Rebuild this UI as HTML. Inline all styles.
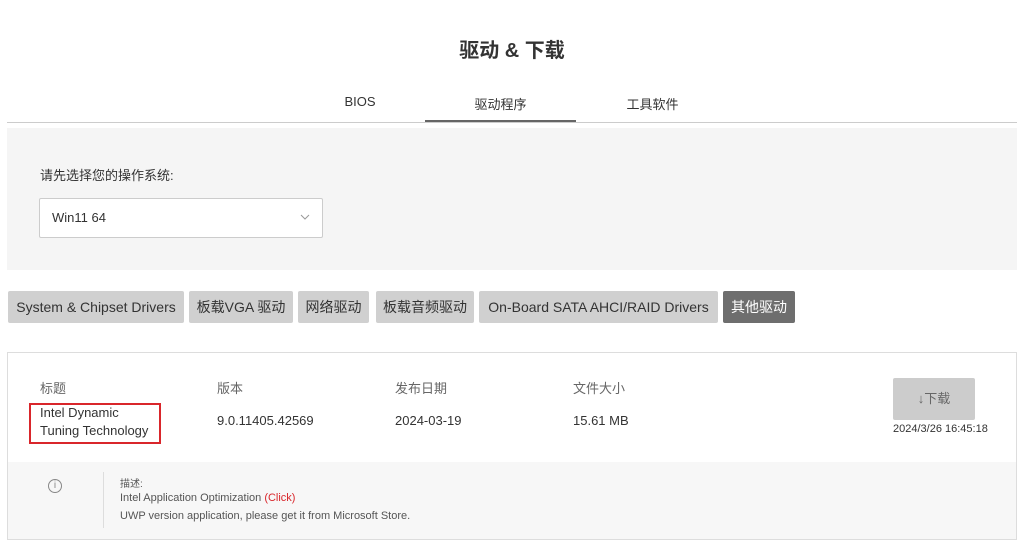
<!DOCTYPE html>
<html><head><meta charset="utf-8"><style>
*{margin:0;padding:0;box-sizing:border-box}
body{width:1024px;height:546px;background:#fff;font-family:"Liberation Sans","Noto Sans CJK SC",sans-serif;color:#333;position:relative;overflow:hidden}
.a{position:absolute;white-space:nowrap}
.btn{position:absolute;top:291px;height:32px;background:#d0d0d0;font-size:14px;line-height:32px;text-align:center;color:#333;border-radius:2px}
</style></head><body>
<div class="a" style="left:0;width:1024px;top:34px;text-align:center;font-size:20px;font-weight:bold;color:#333">驱动 &amp; 下载</div>
<div class="a" style="left:330px;width:60px;top:94px;text-align:center;font-size:13px">BIOS</div>
<div class="a" style="left:425px;width:151px;top:94px;text-align:center;font-size:13px">驱动程序</div>
<div class="a" style="left:600px;width:105px;top:94px;text-align:center;font-size:13px">工具软件</div>
<div class="a" style="left:7px;width:1010px;top:122px;height:1px;background:#ccc"></div>
<div class="a" style="left:425px;width:151px;top:120px;height:2px;background:#666"></div>
<div class="a" style="left:7px;width:1010px;top:128px;height:142px;background:#f5f5f5"></div>
<div class="a" style="left:40px;top:165px;font-size:13px">请先选择您的操作系统:</div>
<div class="a" style="left:39px;top:198px;width:284px;height:40px;background:#fff;border:1px solid #ccc;border-radius:2px;font-size:13px;line-height:38px;padding-left:12px">Win11 64<svg style="position:absolute;right:12px;top:14px" width="10" height="8"><path d="M1 2 L5 6 L9 2" fill="none" stroke="#999" stroke-width="1"/></svg></div>
<div class="btn" style="left:8px;width:176px">System &amp; Chipset Drivers</div>
<div class="btn" style="left:189px;width:104px">板载VGA 驱动</div>
<div class="btn" style="left:298px;width:71px">网络驱动</div>
<div class="btn" style="left:376px;width:98px">板载音频驱动</div>
<div class="btn" style="left:479px;width:239px">On-Board SATA AHCI/RAID Drivers</div>
<div class="btn" style="left:723px;width:72px;background:#6e6e6e;color:#fff">其他驱动</div>
<div class="a" style="left:7px;top:352px;width:1010px;height:188px;border:1px solid #ddd"></div>
<div class="a" style="left:8px;top:462px;width:1008px;height:77px;background:#f7f7f7"></div>
<div class="a" style="left:40px;top:378px;font-size:13px;color:#666">标题</div>
<div class="a" style="left:217px;top:378px;font-size:13px;color:#666">版本</div>
<div class="a" style="left:395px;top:378px;font-size:13px;color:#666">发布日期</div>
<div class="a" style="left:573px;top:378px;font-size:13px;color:#666">文件大小</div>
<div class="a" style="left:29px;top:403px;width:132px;height:41px;border:2px solid #d9262b"></div>
<div class="a" style="left:40px;top:404px;font-size:13px;line-height:18px">Intel Dynamic<br>Tuning Technology</div>
<div class="a" style="left:217px;top:413px;font-size:13px">9.0.11405.42569</div>
<div class="a" style="left:395px;top:413px;font-size:13px">2024-03-19</div>
<div class="a" style="left:573px;top:413px;font-size:13px">15.61 MB</div>
<div class="a" style="left:893px;top:378px;width:82px;height:42px;background:#ccc;border-radius:2px;font-size:13px;line-height:42px;text-align:center;color:#666">↓下载</div>
<div class="a" style="left:893px;top:423px;font-size:11px;color:#333">2024/3/26 16:45:18</div>
<div class="a" style="left:48px;top:479px;width:14px;height:14px;border:1px solid #888;border-radius:50%;font-size:10px;line-height:12px;text-align:center;color:#888">i</div>
<div class="a" style="left:103px;top:472px;width:1px;height:56px;background:#ddd"></div>
<div class="a" style="left:120px;top:475px;font-size:10px;color:#555">描述:</div>
<div class="a" style="left:120px;top:492px;font-size:11px;color:#555">Intel Application Optimization <span style="color:#d9262b">(Click)</span></div>
<div class="a" style="left:120px;top:510px;font-size:11px;color:#555">UWP version application, please get it from Microsoft Store.</div>
</body></html>
